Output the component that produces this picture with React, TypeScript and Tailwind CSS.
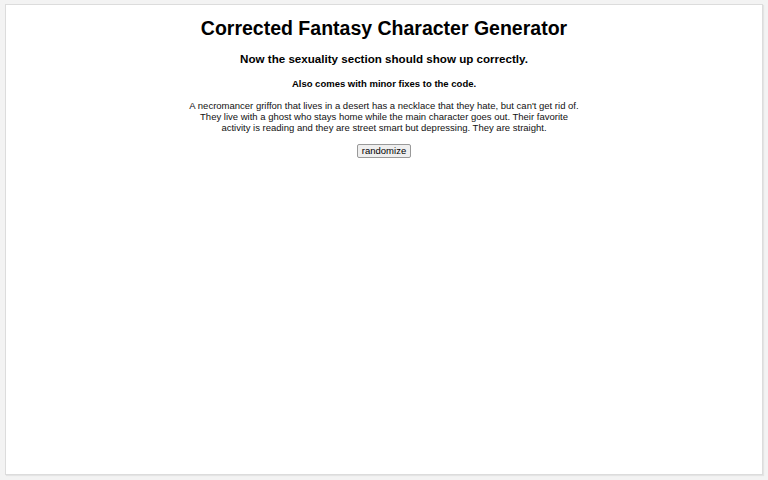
const App = () => {
  const description =
    "A necromancer griffon that lives in a desert has a necklace that they hate, but can't get rid of. They live with a ghost who stays home while the main character goes out. Their favorite activity is reading and they are street smart but depressing. They are straight.";

  return (
    <div
      className="h-[480px] bg-[#f3f3f3] px-[5px] pt-[4px] pb-[4px]"
      style={{ fontFamily: '"Liberation Sans", Arial, sans-serif' }}
    >
      {/* generator panel */}
      <div className="h-[471px] border border-[#dcdcdc] bg-white text-center text-black shadow-[1px_1px_1px_rgba(0,0,0,0.06)]">
        <h1 className="pt-[11px] text-[19.5px] font-bold leading-[24px]">
          Corrected Fantasy Character Generator
        </h1>
        <h2 className="mt-[12px] text-[11.6px] font-bold leading-[14px]">
          Now the sexuality section should show up correctly.
        </h2>
        <p className="mt-[12px] text-[9.5px] font-bold leading-[12px]">
          Also comes with minor fixes to the code.
        </p>

        <p className="mx-auto mt-[10px] w-[392px] text-[9.5px] leading-[11px] text-[#111]">
          {description}
        </p>

        <button className="mt-[11px] rounded-[2px] border border-[#999] bg-[#efefef] px-[4px] py-0 text-[9.5px] leading-[12px]">
          randomize
        </button>
      </div>
    </div>
  );
};

export default App;
